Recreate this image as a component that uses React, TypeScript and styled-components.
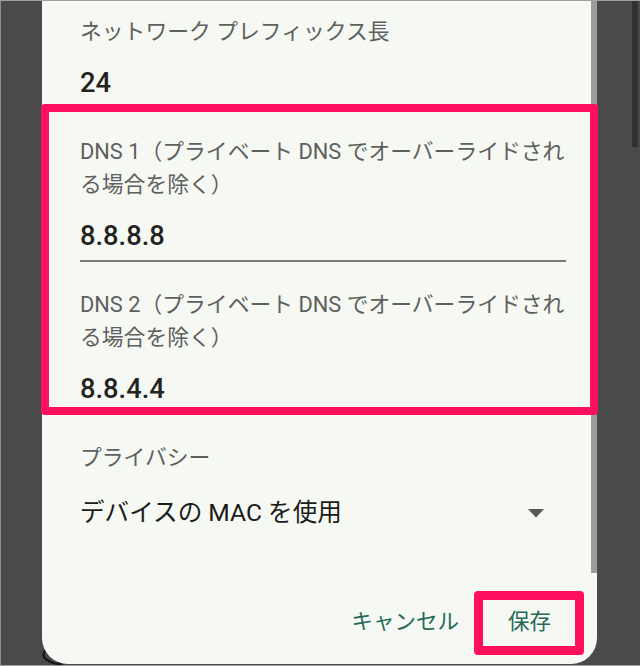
import React from "react";
import styled, { createGlobalStyle } from "styled-components";

const Global = createGlobalStyle`
  html, body { margin: 0; padding: 0; background: #4a4a4a; }
  * { box-sizing: border-box; }
`;

const FONT = `Roboto, "Noto Sans CJK JP", sans-serif`;
const PINK = "#fe105e";

const Frame = styled.div`
  position: relative;
  width: 640px;
  height: 666px;
  background: #4a4a4a;
  border-top: 1px solid #a0a0a0;
  border-left: 1px solid #8c8c8c;
  border-bottom: 1px solid #a0a0a0;
  display: flex;
  align-items: flex-start;
  overflow: hidden;
  font-family: ${FONT};
`;

const Dialog = styled.div`
  position: relative;
  z-index: 1;
  margin-left: 41px;
  width: 555px;
  height: 663px;
  background: #f6f8f4;
  border-radius: 0 0 26px 26px;
  overflow: hidden;
  display: flex;
  flex-direction: column;
  padding: 14px 31px 18px 38px;
`;

const ScrollThumb = styled.div`
  position: absolute;
  top: 0;
  right: 0;
  width: 6px;
  height: 572px;
  background: #9c9c9c;
`;

const Gutter = styled.div`
  flex: 1;
  display: flex;
  justify-content: flex-end;
  padding-right: 2px;
`;

const GutterBar = styled.div`
  width: 6px;
  height: 146px;
  background: #313131;
`;

const Field = styled.div<{ $first?: boolean }>`
  display: flex;
  flex-direction: column;
  margin-top: ${(p) => (p.$first ? "0" : "26px")};
`;

const Label = styled.div`
  font-size: 21.8px;
  line-height: 33px;
  color: #5d605c;
  white-space: nowrap;
`;

const Value = styled.div`
  margin-top: 15px;
  font-size: 27.3px;
  line-height: 40px;
  font-weight: 500;
  color: #222321;
`;

const Underline = styled.div<{ $color: string }>`
  margin-top: 4px;
  height: 2px;
  background: ${(p) => p.$color};
`;

const SelectRow = styled.div`
  margin-top: 19px;
  display: flex;
  align-items: center;
  justify-content: space-between;
  padding-right: 22px;
  font-size: 24.6px;
  line-height: 40px;
  color: #1b1c1a;
`;

const Footer = styled.div`
  margin-top: auto;
  display: flex;
  justify-content: flex-end;
  gap: 25px;
  padding-right: 3px;
`;

const TextButton = styled.button`
  border: none;
  background: transparent;
  height: 48px;
  padding: 0 12px;
  font-family: ${FONT};
  font-size: 21.5px;
  font-weight: 400;
  line-height: 48px;
  color: #246a56;
`;

const Highlight = styled.div<{ $w: number }>`
  position: absolute;
  z-index: 2;
  border: ${(p) => p.$w}px solid ${PINK};
  border-radius: 4px;
  pointer-events: none;
`;

const Artifact = styled.svg`
  position: absolute;
  z-index: 0;
  left: 34px;
  top: 640px;
`;

export default function App() {
  return (
    <>
      <Global />
      <Frame>
        <Artifact width="40" height="26" viewBox="0 0 40 26">
          <path d="M14 6 Q4 14 12 19 Q18 23 28 24" fill="none" stroke="#151515" strokeWidth="2.2" />
          <path d="M14 7 Q17 16 26 23" fill="none" stroke="#151515" strokeWidth="2" />
        </Artifact>
        <Dialog>
          <ScrollThumb />
          <Field $first>
            <Label>ネットワーク プレフィックス長</Label>
            <Value>24</Value>
            <Underline $color="#7a7b79" />
          </Field>
          <Field>
            <Label>
              DNS 1（プライベート DNS でオーバーライドされ
              <br />
              る場合を除く）
            </Label>
            <Value>8.8.8.8</Value>
            <Underline $color="#7a7b79" />
          </Field>
          <Field>
            <Label>
              DNS 2（プライベート DNS でオーバーライドされ
              <br />
              る場合を除く）
            </Label>
            <Value>8.8.4.4</Value>
            <Underline $color="#2b6e5b" />
          </Field>
          <Field>
            <Label>プライバシー</Label>
            <SelectRow>
              <span>デバイスの MAC を使用</span>
              <svg width="16" height="9" viewBox="0 0 16 9">
                <path d="M0 0 L16 0 L8 8.5 Z" fill="#585a58" />
              </svg>
            </SelectRow>
          </Field>
          <Footer>
            <TextButton>キャンセル</TextButton>
            <TextButton>保存</TextButton>
          </Footer>
        </Dialog>
        <Gutter>
          <GutterBar />
        </Gutter>
        <Highlight $w={8} style={{ left: 40, top: 103, width: 557, height: 311 }} />
        <Highlight $w={9} style={{ left: 473, top: 590, width: 110, height: 64 }} />
      </Frame>
    </>
  );
}
